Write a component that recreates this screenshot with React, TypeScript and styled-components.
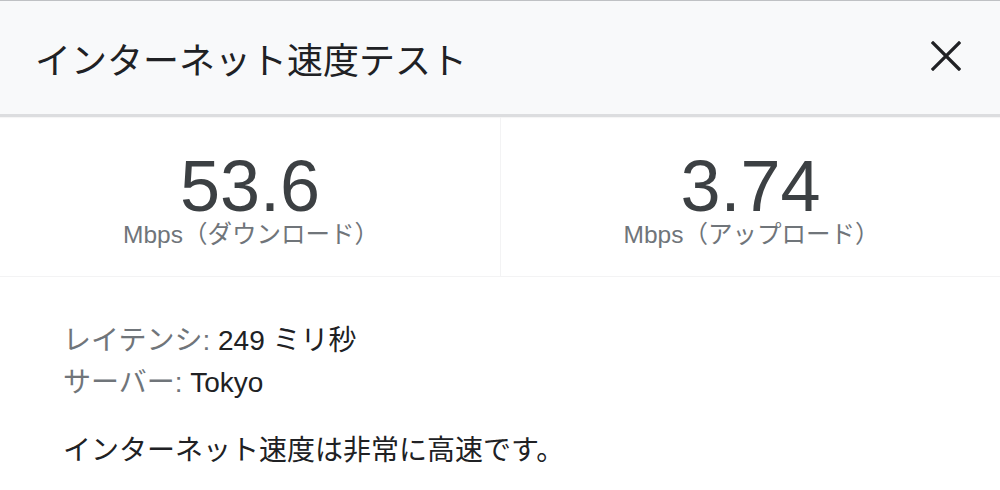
import React from "react";
import styled, { createGlobalStyle } from "styled-components";

const Global = createGlobalStyle`
  html, body { margin: 0; padding: 0; background: #ffffff; }
  body { font-family: "Liberation Sans", "Noto Sans CJK JP", sans-serif; }
`;

const Page = styled.div`
  width: 1000px;
  height: 490px;
  overflow: hidden;
  background: #ffffff;
  display: flex;
  flex-direction: column;
`;

const Header = styled.header`
  flex: none;
  box-sizing: border-box;
  height: 117px;
  border-top: 1px solid #bfc1c4;
  border-bottom: 3px solid #dcdddf;
  box-shadow: 0 1px 1px rgba(0, 0, 0, 0.04);
  background: #f8f9fa;
  display: flex;
  align-items: center;
  justify-content: space-between;
  padding: 0 38px 0 35px;
`;

const Title = styled.h1`
  margin: 0;
  font-family: "Noto Sans CJK JP", sans-serif;
  font-weight: 400;
  font-size: 36px;
  color: #202124;
  line-height: 1;
`;

const CloseButton = styled.button`
  border: 0;
  background: transparent;
  padding: 0;
  width: 32px;
  height: 32px;
  display: flex;
  align-items: center;
  justify-content: center;
  margin-top: -3px;
`;

const Results = styled.section`
  height: 160px;
  flex: none;
  box-sizing: border-box;
  border-bottom: 1px solid #f3f3f4;
  display: grid;
  grid-template-columns: 501px 1fr;
`;

const ResultCell = styled.div<{ $divider?: boolean }>`
  display: flex;
  flex-direction: column;
  align-items: center;
  padding-top: 37px;
  border-right: ${(p) => (p.$divider ? "1px solid #f3f3f4" : "none")};
`;

const Value = styled.div`
  font-family: "Liberation Sans", sans-serif;
  font-size: 72px;
  line-height: 64px;
  color: #3c4043;
`;

const Unit = styled.div`
  font-family: "Liberation Sans", "Noto Sans CJK JP", sans-serif;
  font-size: 24.5px;
  line-height: 28px;
  color: #70757a;
  margin-top: 3px;
  margin-left: 2px;
`;

const Details = styled.section`
  padding: 43px 63px 0;
  display: flex;
  flex-direction: column;
`;

const InfoLine = styled.div`
  font-family: "Liberation Sans", "Noto Sans CJK JP", sans-serif;
  font-size: 28px;
  line-height: 42px;
  color: #202124;
`;

const Label = styled.span`
  color: #70757a;
`;

const Summary = styled.p`
  margin: 23px 0 0;
  font-family: "Noto Sans CJK JP", sans-serif;
  font-size: 28px;
  line-height: 42px;
  color: #202124;
`;

export default function App() {
  return (
    <>
      <Global />
      <Page>
        <Header>
          <Title>インターネット速度テスト</Title>
          <CloseButton aria-label="閉じる">
            <svg width="30" height="30" viewBox="0 0 30 30">
              <path d="M2 2 L28 28 M28 2 L2 28" stroke="#202124" strokeWidth="3.2" strokeLinecap="square" />
            </svg>
          </CloseButton>
        </Header>
        <Results>
          <ResultCell $divider>
            <Value>53.6</Value>
            <Unit>Mbps（ダウンロード）</Unit>
          </ResultCell>
          <ResultCell>
            <Value>3.74</Value>
            <Unit>Mbps（アップロード）</Unit>
          </ResultCell>
        </Results>
        <Details>
          <InfoLine>
            <Label>レイテンシ: </Label>249 ミリ秒
          </InfoLine>
          <InfoLine>
            <Label>サーバー: </Label>Tokyo
          </InfoLine>
          <Summary>インターネット速度は非常に高速です。</Summary>
        </Details>
      </Page>
    </>
  );
}
